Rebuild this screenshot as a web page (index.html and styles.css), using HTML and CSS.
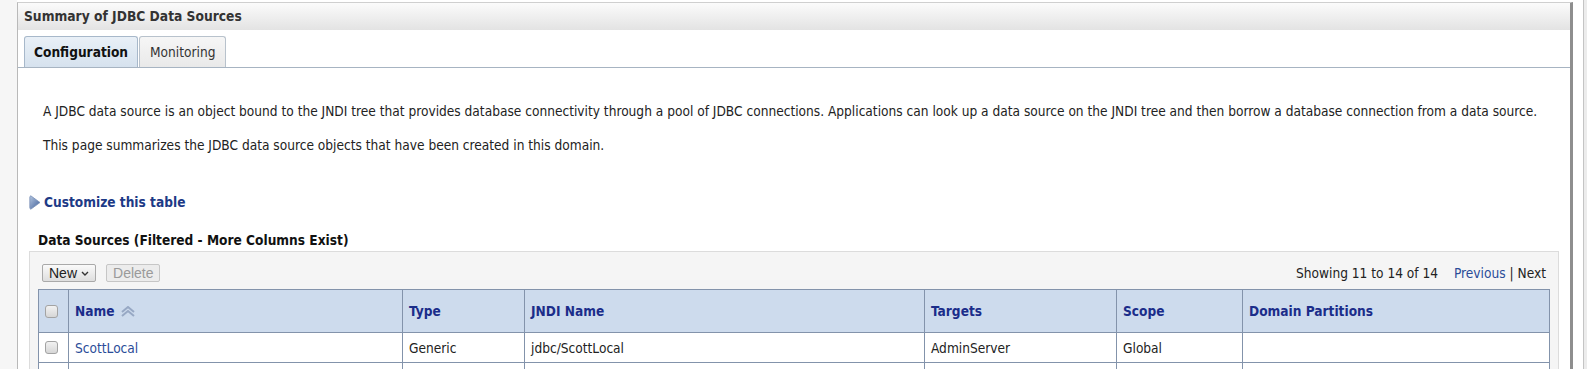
FILE: index.html
```html
<!DOCTYPE html>
<html lang="en">
<head>
    <meta charset="UTF-8">
    <title>Summary of JDBC Data Sources</title>
    <link rel="stylesheet" href="styles.css">
</head>
<body>
    <div class="frame">
        <div class="gutter"></div>
        <div class="panel">
            <div class="panel-title">Summary of JDBC Data Sources</div>
            <div class="tabs">
                <a href="#" class="tab active">Configuration</a>
                <a href="#" class="tab">Monitoring</a>
            </div>
            <div class="content">
                <p class="intro">A JDBC data source is an object bound to the JNDI tree that provides database connectivity through a pool of JDBC connections. Applications can look up a data source on the JNDI tree and then borrow a database connection from a data source.</p>
                <p class="intro">This page summarizes the JDBC data source objects that have been created in this domain.</p>

                <div class="customize">
                    <svg width="12" height="15" viewBox="0 0 12 15">
                        <defs>
                            <linearGradient id="tri" x1="0" y1="0" x2="1" y2="1">
                                <stop offset="0" stop-color="#b4c6e0"/>
                                <stop offset="1" stop-color="#3f5f99"/>
                            </linearGradient>
                        </defs>
                        <path d="M1.8 0.8 L11 7.5 L1.8 14.2 Q0.8 13.8 0.8 12.8 L0.8 2.2 Q0.8 1.2 1.8 0.8 Z" fill="url(#tri)" stroke="#7a90b8" stroke-width="0.8"/>
                    </svg>
                    <a href="#">Customize this table</a>
                </div>

                <h3 class="table-title">Data Sources (Filtered - More Columns Exist)</h3>

                <div class="table-box">
                    <div class="toolbar">
                        <div class="buttons">
                            <button class="btn">New
                                <svg width="8" height="5" viewBox="0 0 8 5"><path d="M1 1 L4 4 L7 1" fill="none" stroke="#333" stroke-width="1.4"/></svg>
                            </button>
                            <button class="btn disabled">Delete</button>
                        </div>
                        <div class="pager">
                            Showing 11 to 14 of 14
                            <a href="#">Previous</a>
                            <span class="sep">|</span>
                            <span>Next</span>
                        </div>
                    </div>

                    <table class="grid">
                        <thead>
                            <tr>
                                <th class="col-check"><span class="check"></span></th>
                                <th class="col-name">Name
                                    <svg class="sort" width="16" height="11" viewBox="0 0 16 11">
                                        <path d="M2 6 L8 1 L14 6" fill="none" stroke="#97a8c4" stroke-width="2"/>
                                        <path d="M2 10 L8 5 L14 10" fill="none" stroke="#97a8c4" stroke-width="2"/>
                                    </svg>
                                </th>
                                <th class="col-type">Type</th>
                                <th class="col-jndi">JNDI Name</th>
                                <th class="col-targets">Targets</th>
                                <th class="col-scope">Scope</th>
                                <th>Domain Partitions</th>
                            </tr>
                        </thead>
                        <tbody>
                            <tr>
                                <td class="col-check"><span class="check"></span></td>
                                <td><a href="#">ScottLocal</a></td>
                                <td>Generic</td>
                                <td>jdbc/ScottLocal</td>
                                <td>AdminServer</td>
                                <td>Global</td>
                                <td></td>
                            </tr>
                            <tr>
                                <td class="col-check"></td>
                                <td></td>
                                <td></td>
                                <td></td>
                                <td></td>
                                <td></td>
                                <td></td>
                            </tr>
                        </tbody>
                    </table>
                </div>
            </div>
        </div>
        <div class="scroll"></div>
    </div>
</body>
</html>
```

FILE: styles.css
```css
html, body {
    margin: 0;
    padding: 0;
    height: 369px;
    overflow: hidden;
    background: #fff;
}
body {
    font-family: "DejaVu Sans Condensed", "DejaVu Sans", sans-serif;
    font-stretch: condensed;
    font-size: 13.6px;
    color: #222;
}
a {
    text-decoration: none;
}
.frame {
    display: flex;
    height: 369px;
}
.gutter {
    width: 17px;
    flex: 0 0 17px;
    background: #f6f6f6;
}
.panel {
    box-sizing: border-box;
    width: 1556px;
    flex: 0 0 1556px;
    margin-top: 2px;
    border-top: 1px solid #cfcfcf;
    border-left: 1px solid #b9b9b9;
    border-right: 3px solid #8e8e8e;
    background: #fff;
}
.scroll {
    flex: 1;
    margin-left: 10px;
    border-left: 1px solid #c4c4c4;
    background: #ececec;
}
.panel-title {
    height: 27px;
    line-height: 27px;
    padding-left: 6px;
    font-size: 13.7px;
    font-weight: bold;
    color: #333;
    background: linear-gradient(#fbfbfb, #e3e3e3);
}

/* tabs */
.tabs {
    display: flex;
    gap: 1px;
    margin-top: 6px;
    padding-left: 6px;
    border-bottom: 1px solid #a7b4c2;
}
.tab {
    height: 30px;
    line-height: 30px;
    padding: 0 10px;
    border: 1px solid #b8c2cc;
    border-bottom: none;
    border-radius: 3px 3px 0 0;
    color: #333;
    background: linear-gradient(#f6f6f6, #e9e9e9);
}
.tab.active {
    padding: 0 9px;
    font-weight: bold;
    color: #111;
    border-color: #a7b8ca;
    background: linear-gradient(#e9f0f7, #d6e2ee);
}

/* content */
.content {
    padding: 35px 11px 0 11px;
}
.intro {
    margin: 0 0 18px 14px;
    line-height: 16px;
    color: #222;
}
.customize {
    display: flex;
    align-items: center;
    gap: 3px;
    height: 16px;
    margin-top: 41px;
}
.customize a {
    font-size: 13.6px;
    font-weight: bold;
    color: #1d3a86;
}
.table-title {
    margin: 22px 0 3px 9px;
    font-size: 13.6px;
    line-height: 16px;
    font-weight: bold;
    color: #111;
}
.table-box {
    border: 1px solid #dcdcdc;
    background: #f5f5f5;
    padding: 12px 8px 0 8px;
}
.toolbar {
    display: flex;
    justify-content: space-between;
    align-items: center;
    height: 18px;
    margin-bottom: 7px;
}
.buttons {
    display: flex;
    gap: 10px;
    padding-left: 4px;
}
.btn {
    height: 18px;
    padding: 0 6px;
    font-family: "Liberation Sans", sans-serif;
    font-size: 14px;
    color: #222;
    border: 1px solid #a9a9a9;
    border-radius: 2px;
    background: linear-gradient(#fafafa, #dedede);
    display: flex;
    align-items: center;
    gap: 4px;
}
.btn.disabled {
    padding: 0 6px;
    color: #9a9a9a;
    border-color: #c6c6c6;
    background: #ececec;
}
.pager {
    padding-right: 4px;
    color: #222;
}
.pager a {
    color: #2a4c98;
    margin-left: 12px;
}
.pager .sep {
    color: #222;
}

/* grid */
.grid {
    width: 100%;
    border-collapse: collapse;
    table-layout: fixed;
    background: #fff;
}
.grid th,
.grid td {
    border: 1px solid #8393ab;
    padding: 0 6px;
    text-align: left;
    white-space: nowrap;
}
.grid th {
    height: 42px;
    background: #cddbed;
    color: #1b2d8a;
    font-weight: bold;
}
.grid td {
    height: 29px;
    color: #222;
}
.grid td a {
    color: #2a4c98;
}
.col-check {
    width: 17px;
}
.col-name {
    width: 321px;
}
.col-type {
    width: 109px;
}
.col-jndi {
    width: 387px;
}
.col-targets {
    width: 179px;
}
.col-scope {
    width: 113px;
}
.sort {
    vertical-align: -1px;
    margin-left: 1px;
}
.check {
    display: block;
    width: 11px;
    height: 11px;
    border: 1px solid #a3a3a3;
    border-radius: 3px;
    background: linear-gradient(#f2f2f2, #d6d6d6);
}
```
